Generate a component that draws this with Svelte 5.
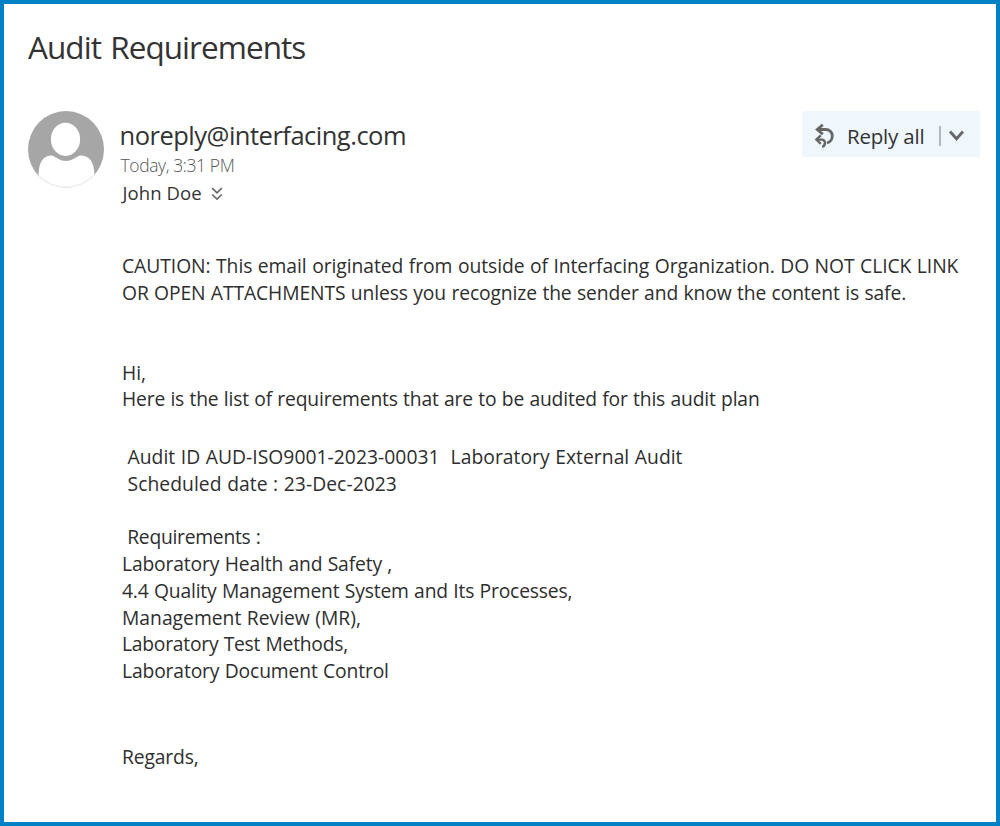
<script lang="ts">
    interface Line {
        text: string;
        tracking: number;
    }

    const subject = "Audit Requirements";
    const sender = "noreply@interfacing.com";
    const received = "Today, 3:31 PM";
    const recipient = "John Doe";

    // tracking is the letter spacing in px
    const caution: Line[] = [
        { text: "CAUTION: This email originated from outside of Interfacing Organization. DO NOT CLICK LINK", tracking: -0.05 },
        { text: "OR OPEN ATTACHMENTS unless you recognize the sender and know the content is safe.", tracking: -0.11 },
    ];
    const greeting: Line[] = [
        { text: "Hi,", tracking: 0 },
        { text: "Here is the list of requirements that are to be audited for this audit plan", tracking: -0.17 },
    ];
    const audit: Line[] = [
        { text: " Audit ID AUD-ISO9001-2023-00031  Laboratory External Audit", tracking: 0.03 },
        { text: " Scheduled date : 23-Dec-2023", tracking: 0.05 },
    ];
    const requirements: Line[] = [
        { text: " Requirements :", tracking: -0.27 },
        { text: "Laboratory Health and Safety ,", tracking: -0.15 },
        { text: "4.4 Quality Management System and Its Processes,", tracking: -0.17 },
        { text: "Management Review (MR),", tracking: 0 },
        { text: "Laboratory Test Methods,", tracking: -0.24 },
        { text: "Laboratory Document Control", tracking: -0.14 },
    ];
    const closing: Line[] = [{ text: "Regards,", tracking: -0.15 }];
</script>

{#snippet block(name: string, lines: Line[])}
    <div class="block {name}">
        {#each lines as line}
            <div class="line"><span style="letter-spacing: {line.tracking}px">{line.text}</span></div>
        {/each}
    </div>
{/snippet}

<main class="message">
    <h1>{subject}</h1>

    <header>
        <svg class="avatar" viewBox="0 0 76 77" width="76" height="77">
            <defs>
                <clipPath id="avatar-clip">
                    <ellipse cx="38" cy="38.3" rx="38" ry="38.3" />
                </clipPath>
            </defs>
            <ellipse cx="38" cy="38.3" rx="38" ry="38.3" fill="#a6a6a6" />
            <path
                clip-path="url(#avatar-clip)"
                d="M10.5 66 C10.5 51 15 44.5 24 44.5 C29 46.5 32 50 38 50 C44 50 47 46.5 52 44.5 C62 44.5 66.5 51 66.5 66 L66.5 77 L10.5 77 Z"
                fill="#fff"
            />
            <path d="M10 63.5 A38 38.3 0 0 0 66 63.5" fill="none" stroke="#e4e4e4" stroke-width="0.6" />
            <ellipse cx="37.5" cy="28.3" rx="14.6" ry="16.6" fill="#fff" />
        </svg>

        <div class="details">
            <div class="sender">{sender}</div>
            <div class="received">{received}</div>
            <div class="recipient">
                <span>{recipient}</span>
                <svg viewBox="0 0 12 14" width="12" height="14" fill="none" stroke="#666" stroke-width="1.6">
                    <path d="M1.2 1.2 L6 5.8 L10.8 1.2 M1.2 7.5 L6 12.1 L10.8 7.5" />
                </svg>
            </div>
        </div>

        <div class="reply">
            <svg class="reply-icon" viewBox="0 0 20 25" width="20" height="25" fill="none" stroke="#666" stroke-width="2.8">
                <path d="M3 6.5 H11.5 C20 6.5 20.5 18 13 20" />
                <path d="M8.8 1.8 L3.2 6.5 L8.8 11.2" />
                <path d="M2.5 16.6 H7.5 C12 16.6 12 22.5 8.2 23.8" stroke-width="2.4" />
                <path d="M6.8 12.4 L2.4 16.6 L6.8 20.8" stroke-width="2.4" />
            </svg>
            <span class="reply-label">Reply all</span>
            <span class="divider"></span>
            <svg class="chevron" viewBox="0 0 15 11" width="15" height="11" fill="none" stroke="#666" stroke-width="2.8">
                <path d="M1 1.5 L7.5 8.8 L14 1.5" />
            </svg>
        </div>
    </header>

    <section class="body">
        {@render block("caution", caution)}
        {@render block("greeting", greeting)}
        {@render block("audit", audit)}
        {@render block("requirements", requirements)}
        {@render block("closing", closing)}
    </section>
</main>

<style>
    :global(body) {
        margin: 0;
        background: #fff;
    }

    .message {
        box-sizing: border-box;
        height: 826px;
        padding: 23px 16px 0 24px;
        border: 4px solid #0080c5;
        background: #fff;
        color: #333;
        font-family: "Open Sans", "Noto Sans", sans-serif;
        overflow: hidden;
    }

    h1 {
        margin: 0;
        height: 84px;
        font-size: 31.5px;
        font-weight: 400;
        line-height: 40px;
        letter-spacing: -0.95px;
        word-spacing: 2px;
        white-space: nowrap;
    }

    header {
        display: flex;
        align-items: flex-start;
        height: 142px;
    }

    .avatar {
        flex: none;
        margin-right: 15.5px;
    }

    .details {
        flex: 1;
        padding-top: 7px;
        white-space: nowrap;
    }

    .sender {
        font-size: 25.5px;
        line-height: 34px;
        letter-spacing: -0.5px;
    }

    .received {
        padding-left: 1px;
        color: #555;
        font-size: 17.5px;
        font-weight: 300;
        line-height: 26px;
        letter-spacing: -0.4px;
    }

    .recipient {
        display: flex;
        align-items: center;
        gap: 9px;
        padding-left: 3px;
        font-size: 18.5px;
        line-height: 30px;
        letter-spacing: 0.1px;
    }

    .recipient svg {
        margin-top: 1px;
    }

    .reply {
        display: flex;
        align-items: center;
        box-sizing: border-box;
        width: 178px;
        height: 46px;
        padding-left: 12px;
        background: #eff6fc;
    }

    .reply-icon {
        margin-top: 3px;
    }

    .reply-label {
        width: 79px;
        margin-left: 13px;
        padding-top: 5px;
        font-size: 20.5px;
        line-height: 41px;
        letter-spacing: -0.2px;
        white-space: nowrap;
    }

    .divider {
        width: 2px;
        height: 20px;
        margin: 4px 8px 0 13px;
        background: #b4b9be;
    }

    .chevron {
        margin-top: 3px;
    }

    .body {
        padding-left: 94px;
        color: #2e2e2e;
        font-size: 19.3px;
        word-spacing: 0.5px;
    }

    .line {
        line-height: 26.8px;
        white-space: pre;
    }

    .greeting {
        margin-top: 53px;
    }

    .audit {
        margin-top: 31px;
    }

    .requirements {
        margin-top: 26.5px;
    }

    .closing {
        margin-top: 59px;
    }
</style>
